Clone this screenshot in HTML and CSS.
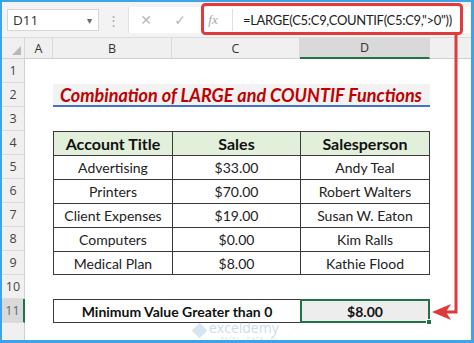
FILE: index.html
```html
<!DOCTYPE html>
<html>
<head>
<meta charset="utf-8">
<link rel="stylesheet" href="styles.css">
</head>
<body>
<div class="frame">
  <div class="toolbar">
    <div class="namebox"><span>D11</span><span class="caret">▾</span></div>
    <div class="dots">⋮</div>
    <div class="fbar">
      <span class="fbtn x">✕</span>
      <span class="fbtn ok">✓</span>
      <span class="fx">fx</span>
      <span class="fdiv"></span>
      <span class="formula">=LARGE(C5:C9,COUNTIF(C5:C9,"&gt;0"))</span>
    </div>
  </div>
  <div class="sheet">
    <div class="corner"><span class="tri"></span></div>
    <div class="colh">A</div>
    <div class="colh">B</div>
    <div class="colh">C</div>
    <div class="colh sel">D</div>
    <div class="colh rest"></div>

    <div class="rowh">1</div><div class="blank span5"></div>
    <div class="rowh">2</div><div class="blank"></div><div class="title">Combination of LARGE and COUNTIF Functions</div><div class="blank"></div>
    <div class="rowh">3</div><div class="blank span5"></div>
    <div class="rowh">4</div><div class="blank"></div><div class="th l">Account Title</div><div class="th">Sales</div><div class="th r">Salesperson</div><div class="blank"></div>
    <div class="rowh">5</div><div class="blank"></div><div class="td l">Advertising</div><div class="td">$33.00</div><div class="td r">Andy Teal</div><div class="blank"></div>
    <div class="rowh">6</div><div class="blank"></div><div class="td l">Printers</div><div class="td">$70.00</div><div class="td r">Robert Walters</div><div class="blank"></div>
    <div class="rowh">7</div><div class="blank"></div><div class="td l">Client Expenses</div><div class="td">$19.00</div><div class="td r">Susan W. Eaton</div><div class="blank"></div>
    <div class="rowh">8</div><div class="blank"></div><div class="td l">Computers</div><div class="td">$0.00</div><div class="td r">Kim Ralls</div><div class="blank"></div>
    <div class="rowh">9</div><div class="blank"></div><div class="td l b">Medical Plan</div><div class="td b">$8.00</div><div class="td r b">Kathie Flood</div><div class="blank"></div>
    <div class="rowh">10</div><div class="blank span5"></div>
    <div class="rowh selr">11</div><div class="blank"></div><div class="label">Minimum Value Greater than 0</div><div class="result">$8.00<span class="handle"></span></div><div class="blank"></div>
    <div class="rowh"></div><div class="blank span5"></div>
  </div>
  <div class="watermark"><span class="wm-logo"></span><span class="wm-text"><span class="wm-main">exceldemy</span><small>EXCEL · DATA · BI</small></span></div>
  <svg class="annot" width="474" height="343" viewBox="0 0 474 343">
    <rect x="202.5" y="4.5" width="259" height="29" rx="3" fill="none" stroke="#e03a3a" stroke-width="3"/>
    <polyline points="456,33 456,312 446,312" fill="none" stroke="#e03a3a" stroke-width="3"/>
    <polygon points="432,312 451,304 446,312 451,320" fill="#e03a3a"/>
  </svg>
</div>
</body>
</html>
```
FILE: styles.css
```css
* { box-sizing: border-box; }
html, body { margin: 0; padding: 0; background: #fff; }
.frame {
  position: relative;
  width: 474px;
  height: 343px;
  overflow: hidden;
  border-style: solid;
  border-color: #3fa3ea;
  border-width: 2px 3px 3px 2px;
  background: #fff;
  font-family: "Lato", "Open Sans", sans-serif;
}
.toolbar {
  height: 36px;
  background: #f3f3f3;
  display: flex;
  align-items: center;
  padding-left: 5px;
  border-bottom: 1px solid #dcdcdc;
}
.namebox {
  flex: none;
  width: 92px;
  height: 22px;
  background: #fff;
  border: 1px solid #d6d6d6;
  display: flex;
  align-items: center;
  justify-content: space-between;
  padding: 0 6px 0 5px;
  font-family: "Open Sans", sans-serif;
  font-size: 13.5px;
  color: #333;
}
.caret { font-size: 10px; color: #666; }
.dots { flex: none; width: 29px; text-align: center; color: #aaa; font-size: 13px; }
.fbar {
  flex: 1;
  min-width: 0;
  height: 26px;
  background: #fff;
  display: flex;
  align-items: center;
  border-left: 1px solid #e3e3e3;
}
.fbtn { flex: none; color: #b8b8b8; font-size: 14px; width: 34px; text-align: center; font-family: "DejaVu Sans", sans-serif; }
.fx { flex: none; font-family: "Liberation Serif", serif; font-style: italic; color: #a8a8a8; font-size: 13px; margin-left: 7px; width: 18px; text-align: center; }
.fdiv { flex: none; width: 1px; height: 22px; background: #e0e0e0; margin-left: 10px; }
.formula {
  flex: none;
  margin-left: 10px;
  font-family: "Lato", sans-serif;
  font-size: 13px;
  letter-spacing: -0.3px;
  color: #222;
  white-space: nowrap;
}
.sheet {
  display: grid;
  grid-template-columns: 23px 28px 119px 128px 130px 1fr;
  grid-template-rows: 21px repeat(12, 24px);
}
.corner { background: #f0f0f0; border-right: 1px solid #d8d8d8; border-bottom: 1px solid #d0d0d0; position: relative; }
.tri { position: absolute; right: 3px; bottom: 3px; width: 0; height: 0; border-left: 9px solid transparent; border-bottom: 9px solid #b8b8b8; }
.colh {
  background: #f0f0f0;
  border-right: 1px solid #d8d8d8;
  border-bottom: 1px solid #d0d0d0;
  display: flex; align-items: center; justify-content: center;
  font-family: "Open Sans", sans-serif;
  font-size: 12.5px;
  color: #333;
}
.colh.sel { background: #d9d9d9; border-bottom: 2px solid #217346; }
.colh.rest { border-right: none; }
.rowh {
  background: #f0f0f0;
  border-right: 1px solid #d0d0d0;
  border-bottom: 1px solid #dcdcdc;
  display: flex; align-items: center; justify-content: center;
  font-family: "Open Sans", sans-serif;
  font-size: 12.5px;
  color: #444;
}
.rowh.selr { background: #d9d9d9; border-right: 2px solid #217346; color: #666; }
.blank { background: #fff; }
.span5 { grid-column: span 5; }
.title {
  grid-column: span 3;
  background: #f2f2f2;
  border-bottom: 2px solid #4472c4;
  margin-top: 1px;
  color: #c00000;
  font-weight: bold;
  font-style: italic;
  font-size: 18px;
  display: flex; align-items: center;
  padding-left: 7px;
  white-space: nowrap;
}
.th, .td {
  display: flex; align-items: center; justify-content: center;
  border-left: 1px solid #3a3a3a;
  border-top: 1px solid #3a3a3a;
  color: #222;
  white-space: nowrap;
}
.th { background: #e2efda; font-weight: bold; font-size: 16px; color: #111; }
.td { font-size: 14px; }
.r { border-right: 1px solid #3a3a3a; }
.b { border-bottom: 1px solid #3a3a3a; }
.label {
  grid-column: span 2;
  border: 1px solid #3a3a3a;
  border-right: none;
  display: flex; align-items: center; justify-content: center;
  font-weight: bold; font-size: 14px; color: #111;
}
.result {
  position: relative;
  background: #ededed;
  border: 2px solid #217346;
  display: flex; align-items: center; justify-content: center;
  font-weight: bold; font-size: 14px; color: #111;
}
.handle { position: absolute; right: -4px; bottom: -4px; width: 6px; height: 6px; background: #217346; border: 1px solid #fff; }
.watermark {
  position: absolute;
  left: 192px; top: 317px;
  display: flex; align-items: center; gap: 4px;
  opacity: 0.35;
}
.wm-logo { width: 11px; height: 11px; background: #8fb4d8; transform: rotate(45deg); }
.wm-text { display: flex; flex-direction: column; color: #6f9cc8; font-family: "Open Sans", sans-serif; }
.wm-main { font-size: 14px; line-height: 17px; }
.wm-text small { font-size: 5px; line-height: 6px; letter-spacing: 1px; padding-left: 12px; }
.annot { position: absolute; left: -2px; top: -2px; pointer-events: none; }
```
